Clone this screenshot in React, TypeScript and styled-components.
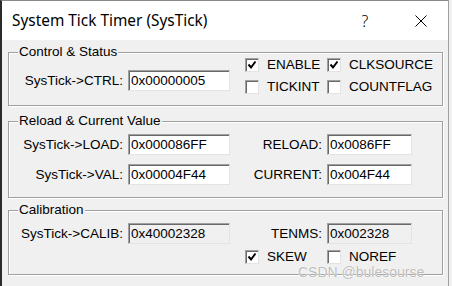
import React from 'react';
import styled, { createGlobalStyle, css } from 'styled-components';

const GlobalStyle = createGlobalStyle`
  html, body {
    margin: 0;
    padding: 0;
    background: #f0f0f0;
  }
  body {
    font-family: "Liberation Sans", Arial, sans-serif;
  }
`;

// classic 3D sunken edge used by edit boxes and check boxes
const sunken = css`
  box-sizing: border-box;
  border: 1px solid;
  border-color: #a0a0a0 #e3e3e3 #e3e3e3 #a0a0a0;
  box-shadow: inset 1px 1px 0 #696969;
`;

const Window = styled.div`
  position: relative;
  box-sizing: border-box;
  width: 449px;
  height: 286px;
  border-top: 1px solid #8a8a8a;
  border-left: 2px solid #2b2b2b;
  border-right: 1px solid #a0a0a0;
  background: #f0f0f0;
  overflow: hidden;
`;

const TitleBar = styled.div`
  display: flex;
  align-items: center;
  height: 39px;
  padding-left: 10px;
  background: #fff;
`;

const Title = styled.div`
  flex: 1;
  font-family: "Noto Sans", "DejaVu Sans", sans-serif;
  font-size: 15.4px;
  color: #000;
`;

const CaptionButton = styled.div<{ $gap: number }>`
  display: flex;
  align-items: center;
  justify-content: center;
  width: 46px;
  height: 39px;
  margin-right: ${(p) => p.$gap}px;
  font-family: "Noto Sans", "DejaVu Sans", sans-serif;
  font-size: 16px;
  font-weight: 300;
  color: #000;
`;

const Body = styled.div`
  display: flex;
  flex-direction: column;
  padding: 12px 5px 0 6px;
`;

const Group = styled.section<{ $h: number; $top: number; $pad: number; $rows: string; $gap: number }>`
  position: relative;
  box-sizing: border-box;
  height: ${(p) => p.$h}px;
  margin-top: ${(p) => p.$top}px;
  padding-top: ${(p) => p.$pad}px;
  border: 1px solid #a0a0a0;
  box-shadow: inset 1px 1px 0 #fff, 1px 1px 0 #fff;
  display: grid;
  grid-template-columns: 114px 102px 87px 85px;
  grid-template-rows: ${(p) => p.$rows};
  column-gap: 5px;
  row-gap: ${(p) => p.$gap}px;
  align-content: start;
`;

const Legend = styled.span`
  position: absolute;
  top: -9px;
  left: 9px;
  padding: 0 1px;
  background: #f0f0f0;
  font-size: 13.5px;
  line-height: 16px;
  color: #000;
`;

const FieldLabel = styled.div`
  font-size: 13.5px;
  line-height: 21px;
  text-align: right;
  color: #000;
  white-space: nowrap;
`;

const TextBox = styled.div<{ $readonly?: boolean }>`
  ${sunken};
  height: 21px;
  padding: 0 2px;
  font-size: 13.5px;
  line-height: 19px;
  color: #000;
  background: ${(p) => (p.$readonly ? '#f0f0f0' : '#fff')};
`;

const CtrlLabel = styled(FieldLabel)`
  grid-row: 1 / 3;
  align-self: end;
  margin-bottom: 3px;
`;

const CtrlBox = styled(TextBox)`
  grid-row: 1 / 3;
  align-self: end;
  margin-bottom: 3px;
`;

const CheckGrid = styled.div<{ $row: string }>`
  grid-column: 3 / 5;
  grid-row: ${(p) => p.$row};
  display: grid;
  grid-template-columns: 82px auto;
  grid-auto-rows: 15px;
  row-gap: 7px;
  padding-left: 10px;
`;

const CheckItem = styled.label`
  display: flex;
  align-items: center;
  gap: 8px;
  font-size: 13.5px;
  color: #000;
  white-space: nowrap;
`;

const Box = styled.span`
  ${sunken};
  display: flex;
  align-items: center;
  justify-content: center;
  width: 14px;
  height: 14px;
  background: #fff;
`;

const Watermark = styled.div`
  position: absolute;
  left: 296px;
  top: 262px;
  font-size: 14px;
  line-height: 18px;
  color: rgba(150, 150, 150, 0.65);
  text-shadow: 0 0 1px #fff, 0 0 1px #fff;
  pointer-events: none;
`;

const Check: React.FC<{ label: string; checked?: boolean }> = ({ label, checked }) => (
  <CheckItem>
    <Box>
      {checked && (
        <svg width="10" height="10" viewBox="0 0 10 10">
          <polyline points="1.5,4.5 4,7.5 8.5,1.5" fill="none" stroke="#000" strokeWidth="2" />
        </svg>
      )}
    </Box>
    {label}
  </CheckItem>
);

const App: React.FC = () => {
  return (
    <Window>
      <GlobalStyle />
      <TitleBar>
        <Title>System Tick Timer (SysTick)</Title>
        <CaptionButton $gap={10}>?</CaptionButton>
        <CaptionButton $gap={4}>
          <svg width="12" height="12" viewBox="0 0 12 12">
            <path d="M0.5 0.5 L11.5 11.5 M11.5 0.5 L0.5 11.5" stroke="#000" strokeWidth="1" />
          </svg>
        </CaptionButton>
      </TitleBar>

      <Body>
        <Group $h={54} $top={0} $pad={4} $rows="15px 15px" $gap={7}>
          <Legend>Control &amp; Status</Legend>
          <CtrlLabel>SysTick-&gt;CTRL:</CtrlLabel>
          <CtrlBox>0x00000005</CtrlBox>
          <CheckGrid $row="1 / 3">
            <Check label="ENABLE" checked />
            <Check label="CLKSOURCE" checked />
            <Check label="TICKINT" />
            <Check label="COUNTFLAG" />
          </CheckGrid>
        </Group>

        <Group $h={77} $top={15} $pad={12} $rows="21px 21px" $gap={9}>
          <Legend>Reload &amp; Current Value</Legend>
          <FieldLabel>SysTick-&gt;LOAD:</FieldLabel>
          <TextBox>0x000086FF</TextBox>
          <FieldLabel>RELOAD:</FieldLabel>
          <TextBox>0x0086FF</TextBox>
          <FieldLabel>SysTick-&gt;VAL:</FieldLabel>
          <TextBox>0x00004F44</TextBox>
          <FieldLabel>CURRENT:</FieldLabel>
          <TextBox>0x004F44</TextBox>
        </Group>

        <Group $h={65} $top={12} $pad={12} $rows="21px 15px" $gap={5}>
          <Legend>Calibration</Legend>
          <FieldLabel>SysTick-&gt;CALIB:</FieldLabel>
          <TextBox $readonly>0x40002328</TextBox>
          <FieldLabel>TENMS:</FieldLabel>
          <TextBox $readonly>0x002328</TextBox>
          <CheckGrid $row="2">
            <Check label="SKEW" checked />
            <Check label="NOREF" />
          </CheckGrid>
        </Group>
      </Body>

      <Watermark>CSDN @bulesourse</Watermark>
    </Window>
  );
};

export default App;
